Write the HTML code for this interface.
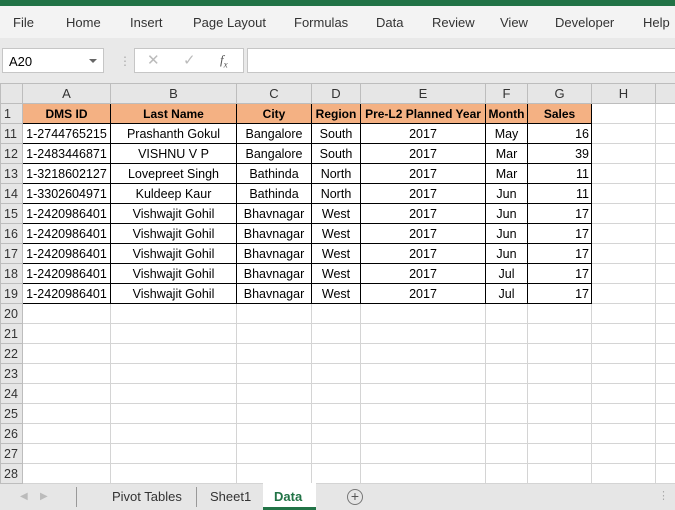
<!DOCTYPE html><html><head><style>
*{margin:0;padding:0;box-sizing:border-box}
body{width:675px;height:510px;overflow:hidden;background:#fff;font-family:"Liberation Sans",Arial,sans-serif;position:relative}
.g{position:absolute;left:0;top:0;width:675px;height:6px;background:#217346}
.rib{position:absolute;left:0;top:6px;width:675px;height:32px;background:#f3f3f3;font-size:13px;color:#333}
.rib span{position:absolute;top:9px}
.fb{position:absolute;left:0;top:38px;width:675px;height:46px;background:#e9e9e9}
.box{position:absolute;background:#fff;border:1px solid #c6c6c6}
table{position:absolute;left:0;top:83px;width:675px;border-collapse:collapse;table-layout:fixed;font-size:12.5px}
td{height:20px;border:1px solid #d4d4d4;padding:0 2px;white-space:nowrap;overflow:hidden;text-align:center}
tr.h td{background:#e6e6e6;color:#333;font-size:13px;border-color:#bdbdbd}
td.r{background:#e6e6e6;color:#333;border-color:#bdbdbd;text-align:left;padding-left:3px}
.d td.c{border:1px solid #000}
tr.hd td.c{background:#f4b183;font-weight:bold;font-size:12px;border:1px solid #000;padding:0 1px}
.rt{text-align:right!important}
.tabs{position:absolute;left:0;top:484px;width:675px;height:26px;background:#e6e6e6;font-size:13px;color:#333}
.tabs span{position:absolute;top:5px}
</style></head><body>
<div class="g"></div>
<div class="rib"><span style="left:13px">File</span><span style="left:66px">Home</span><span style="left:130px">Insert</span><span style="left:193px">Page Layout</span><span style="left:294px">Formulas</span><span style="left:376px">Data</span><span style="left:432px">Review</span><span style="left:500px">View</span><span style="left:555px">Developer</span><span style="left:643px">Help</span></div>
<div class="fb">
<div class="box" style="left:2px;top:10px;width:102px;height:25px;font-size:13px;padding:5px 6px">A20<span style="position:absolute;right:6px;top:10px;border-left:4px solid transparent;border-right:4px solid transparent;border-top:4px solid #666"></span></div>
<div style="position:absolute;left:119px;top:16px;color:#aaa;font-size:12px">⋮</div>
<div class="box" style="left:134px;top:10px;width:110px;height:25px;font-size:15px;color:#bbb"><span style="position:absolute;left:12px;top:2px">✕</span><span style="position:absolute;left:48px;top:2px">✓</span><span style="position:absolute;left:85px;top:3px;color:#555;font-style:italic;font-family:'Liberation Serif',serif;font-size:13px">f<sub style="font-size:9px">x</sub></span></div>
<div class="box" style="left:247px;top:10px;width:430px;height:25px"></div>
</div>
<table>
<colgroup><col style="width:22px"><col style="width:88px"><col style="width:126px"><col style="width:75px"><col style="width:49px"><col style="width:125px"><col style="width:42px"><col style="width:64px"><col style="width:64px"><col style="width:20px"></colgroup>
<tr class="h"><td style="background:#e6e6e6"></td><td>A</td><td>B</td><td>C</td><td>D</td><td>E</td><td>F</td><td>G</td><td>H</td><td></td></tr>
<tr class="hd d"><td class="r">1</td><td class="c">DMS ID</td><td class="c">Last Name</td><td class="c">City</td><td class="c">Region</td><td class="c">Pre-L2 Planned Year</td><td class="c">Month</td><td class="c">Sales</td><td></td><td></td></tr>
<tr class="d"><td class="r">11</td><td class="c">1-2744765215</td><td class="c">Prashanth Gokul</td><td class="c">Bangalore</td><td class="c">South</td><td class="c">2017</td><td class="c">May</td><td class="c rt">16</td><td></td><td></td></tr>
<tr class="d"><td class="r">12</td><td class="c">1-2483446871</td><td class="c">VISHNU V P</td><td class="c">Bangalore</td><td class="c">South</td><td class="c">2017</td><td class="c">Mar</td><td class="c rt">39</td><td></td><td></td></tr>
<tr class="d"><td class="r">13</td><td class="c">1-3218602127</td><td class="c">Lovepreet Singh</td><td class="c">Bathinda</td><td class="c">North</td><td class="c">2017</td><td class="c">Mar</td><td class="c rt">11</td><td></td><td></td></tr>
<tr class="d"><td class="r">14</td><td class="c">1-3302604971</td><td class="c">Kuldeep Kaur</td><td class="c">Bathinda</td><td class="c">North</td><td class="c">2017</td><td class="c">Jun</td><td class="c rt">11</td><td></td><td></td></tr>
<tr class="d"><td class="r">15</td><td class="c">1-2420986401</td><td class="c">Vishwajit Gohil</td><td class="c">Bhavnagar</td><td class="c">West</td><td class="c">2017</td><td class="c">Jun</td><td class="c rt">17</td><td></td><td></td></tr>
<tr class="d"><td class="r">16</td><td class="c">1-2420986401</td><td class="c">Vishwajit Gohil</td><td class="c">Bhavnagar</td><td class="c">West</td><td class="c">2017</td><td class="c">Jun</td><td class="c rt">17</td><td></td><td></td></tr>
<tr class="d"><td class="r">17</td><td class="c">1-2420986401</td><td class="c">Vishwajit Gohil</td><td class="c">Bhavnagar</td><td class="c">West</td><td class="c">2017</td><td class="c">Jun</td><td class="c rt">17</td><td></td><td></td></tr>
<tr class="d"><td class="r">18</td><td class="c">1-2420986401</td><td class="c">Vishwajit Gohil</td><td class="c">Bhavnagar</td><td class="c">West</td><td class="c">2017</td><td class="c">Jul</td><td class="c rt">17</td><td></td><td></td></tr>
<tr class="d"><td class="r">19</td><td class="c">1-2420986401</td><td class="c">Vishwajit Gohil</td><td class="c">Bhavnagar</td><td class="c">West</td><td class="c">2017</td><td class="c">Jul</td><td class="c rt">17</td><td></td><td></td></tr>
<tr><td class="r">20</td><td></td><td></td><td></td><td></td><td></td><td></td><td></td><td></td><td></td></tr>
<tr><td class="r">21</td><td></td><td></td><td></td><td></td><td></td><td></td><td></td><td></td><td></td></tr>
<tr><td class="r">22</td><td></td><td></td><td></td><td></td><td></td><td></td><td></td><td></td><td></td></tr>
<tr><td class="r">23</td><td></td><td></td><td></td><td></td><td></td><td></td><td></td><td></td><td></td></tr>
<tr><td class="r">24</td><td></td><td></td><td></td><td></td><td></td><td></td><td></td><td></td><td></td></tr>
<tr><td class="r">25</td><td></td><td></td><td></td><td></td><td></td><td></td><td></td><td></td><td></td></tr>
<tr><td class="r">26</td><td></td><td></td><td></td><td></td><td></td><td></td><td></td><td></td><td></td></tr>
<tr><td class="r">27</td><td></td><td></td><td></td><td></td><td></td><td></td><td></td><td></td><td></td></tr>
<tr><td class="r">28</td><td></td><td></td><td></td><td></td><td></td><td></td><td></td><td></td><td></td></tr>
</table>
<div class="tabs">
<span style="left:20px;color:#bbb;font-size:10px;top:7px">◀</span><span style="left:40px;color:#bbb;font-size:10px;top:7px">▶</span>
<div style="position:absolute;left:76px;top:3px;width:1px;height:20px;background:#999"></div>
<span style="left:112px">Pivot Tables</span>
<div style="position:absolute;left:196px;top:3px;width:1px;height:20px;background:#999"></div>
<span style="left:210px">Sheet1</span>
<div style="position:absolute;left:263px;top:-1px;width:53px;height:27px;background:#fff;border-bottom:3px solid #217346"></div>
<span style="left:274px;color:#217346;font-weight:bold">Data</span>
<div style="position:absolute;left:347px;top:5px;width:16px;height:16px;border:1px solid #777;border-radius:50%;text-align:center;line-height:13px;font-size:14px;color:#555">+</div>
<span style="left:658px;color:#aaa;font-size:11px">⋮</span>
</div>
</body></html>
